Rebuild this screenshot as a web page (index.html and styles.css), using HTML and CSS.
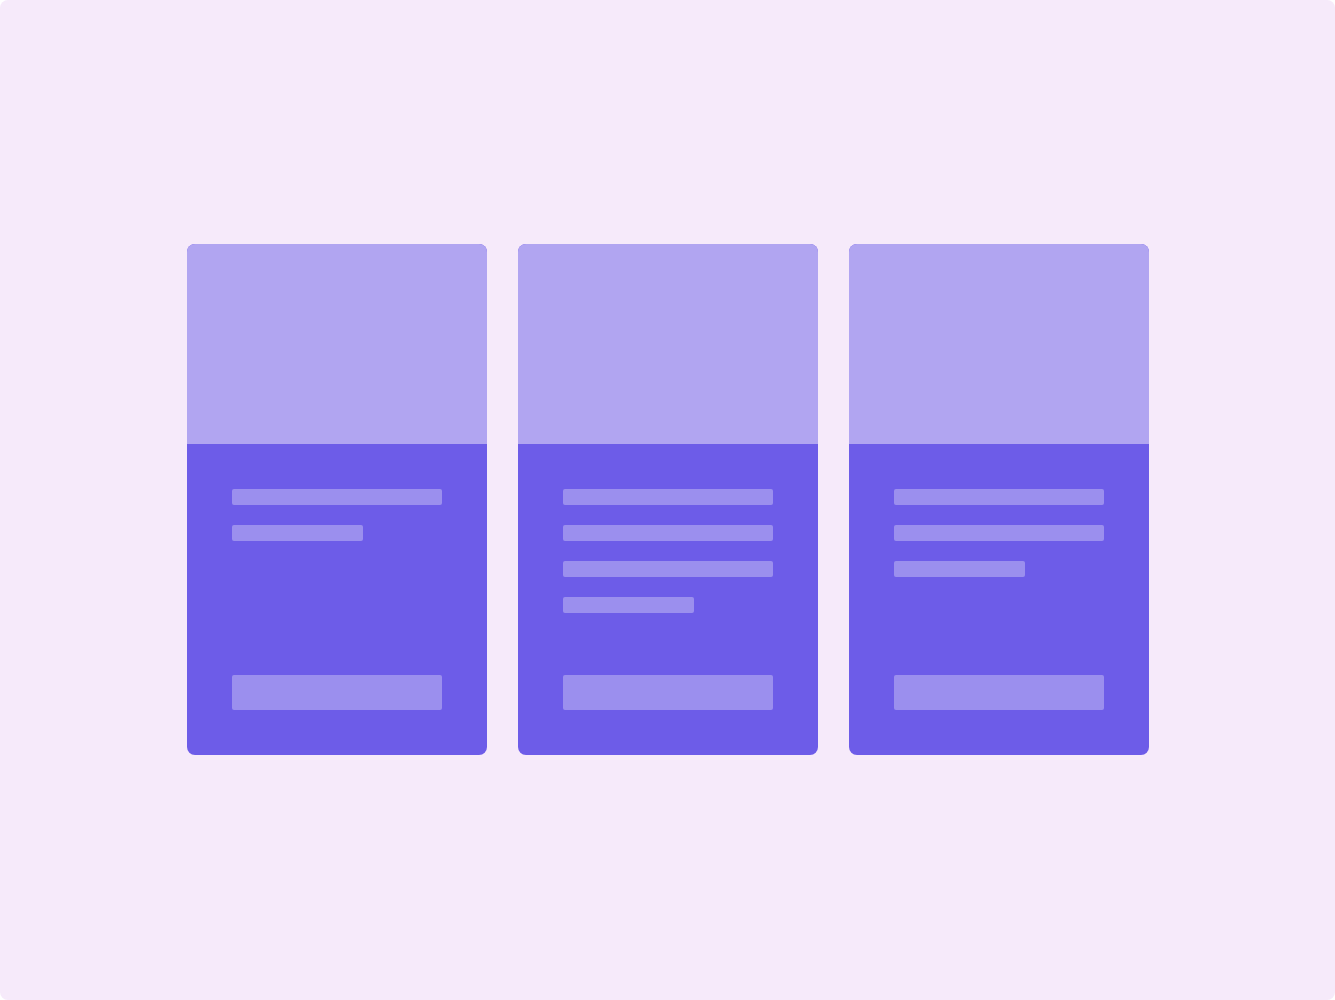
FILE: index.html
```html
<!DOCTYPE html>
<html lang="en">
<head>
    <meta charset="UTF-8">
    <meta name="viewport" content="width=device-width, initial-scale=1.0">
    <title>Card Skeletons</title>
    <link rel="stylesheet" href="styles.css">
</head>
<body>
    <div class="page">
        <div class="cards">
            <div class="card">
                <div class="card-image"></div>
                <div class="card-body">
                    <div class="line"></div>
                    <div class="line short"></div>
                    <div class="card-button"></div>
                </div>
            </div>
            <div class="card">
                <div class="card-image"></div>
                <div class="card-body">
                    <div class="line"></div>
                    <div class="line"></div>
                    <div class="line"></div>
                    <div class="line short"></div>
                    <div class="card-button"></div>
                </div>
            </div>
            <div class="card">
                <div class="card-image"></div>
                <div class="card-body">
                    <div class="line"></div>
                    <div class="line"></div>
                    <div class="line short"></div>
                    <div class="card-button"></div>
                </div>
            </div>
        </div>
    </div>
</body>
</html>
```

FILE: styles.css
```css
body {
    margin: 0;
    background: #fff;
}
.page {
    width: 1335px;
    height: 1000px;
    background: #f6eafa;
    border-radius: 8px;
    display: flex;
    align-items: center;
    justify-content: center;
}
.cards {
    display: flex;
    gap: 31px;
    margin-left: 1px;
    margin-bottom: 1px;
}
.card {
    width: 300px;
    height: 511px;
    border-radius: 8px;
    overflow: hidden;
    display: flex;
    flex-direction: column;
    background: #6d5ce8;
}
.card-image {
    height: 200px;
    background: #b1a5f1;
}
.card-body {
    flex: 1;
    display: flex;
    flex-direction: column;
    gap: 20px;
    padding: 45px;
}
.line {
    height: 16px;
    border-radius: 2px;
    background: #9b8fee;
}
.line.short {
    width: 131px;
}
.card-button {
    margin-top: auto;
    height: 35px;
    border-radius: 2px;
    background: #9b8fee;
}
```
